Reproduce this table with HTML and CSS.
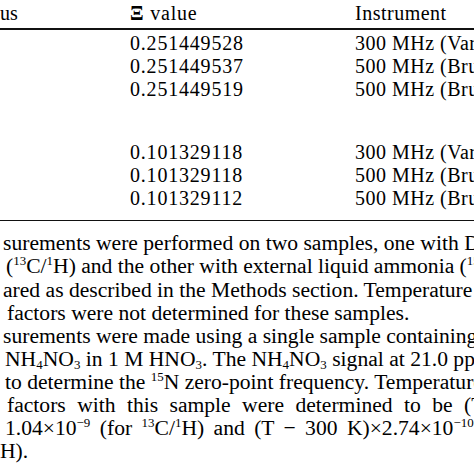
FILE: index.html
```html
<!DOCTYPE html>
<html>
<head>
<meta charset="utf-8">
<link rel="stylesheet" href="styles.css">
</head>
<body>
<div class="page">
  <div class="table">
    <div class="row head">
      <div class="c1">us</div>
      <div class="c2"><span class="xi">Ξ</span> value</div>
      <div class="c3">Instrument</div>
    </div>
    <div class="rule top"></div>
    <div class="body">
      <div class="row"><div class="c1"></div><div class="c2">0.251449528</div><div class="c3">300 MHz (Varian)</div></div>
      <div class="row"><div class="c1"></div><div class="c2">0.251449537</div><div class="c3">500 MHz (Bruker)</div></div>
      <div class="row"><div class="c1"></div><div class="c2">0.251449519</div><div class="c3">500 MHz (Bruker)</div></div>
      <div class="spacer"></div>
      <div class="row"><div class="c1"></div><div class="c2">0.101329118</div><div class="c3">300 MHz (Varian)</div></div>
      <div class="row"><div class="c1"></div><div class="c2">0.101329118</div><div class="c3">500 MHz (Bruker)</div></div>
      <div class="row"><div class="c1"></div><div class="c2">0.101329112</div><div class="c3">500 MHz (Bruker)</div></div>
    </div>
    <div class="rule bottom"></div>
  </div>
  <div class="notes">
    <div class="ln l1">surements were performed on two samples, one with DSS</div>
    <div class="ln l2">(<sup>13</sup>C/<sup>1</sup>H) and the other with external liquid ammonia (<sup>15</sup>N</div>
    <div class="ln l3">ared as described in the Methods section. Temperature co</div>
    <div class="ln l4">factors were not determined for these samples.</div>
    <div class="ln l5">surements were made using a single sample containing DSS</div>
    <div class="ln l6">NH<sub>4</sub>NO<sub>3</sub> in 1 M HNO<sub>3</sub>. The NH<sub>4</sub>NO<sub>3</sub> signal at 21.0 ppm</div>
    <div class="ln l7">to determine the <sup>15</sup>N zero-point frequency. Temperature co</div>
    <div class="ln l8">factors with this sample were determined to be (T</div>
    <div class="ln l9">1.04×10<sup>−9</sup> (for <sup>13</sup>C/<sup>1</sup>H) and (T − 300 K)×2.74×10<sup>−10</sup></div>
    <div class="ln l10">H).</div>
  </div>
</div>
</body>
</html>
```
FILE: styles.css
```css
html, body {
  margin: 0;
  padding: 0;
  background: #fff;
}
body {
  width: 474px;
  height: 474px;
  overflow: hidden;
}
.page {
  width: 474px;
  overflow: hidden;
  font-family: "Liberation Serif", "Times New Roman", serif;
  color: #000;
  font-size: 20px;
}
.table {
  display: flex;
  flex-direction: column;
}
.row {
  display: grid;
  grid-template-columns: 130px 225px 200px;
  height: 23.4px;
  line-height: 23.4px;
  white-space: nowrap;
}
.head {
  height: 24px;
  line-height: 24px;
  padding-top: 1px;
}
.c2 {
  letter-spacing: 0.8px;
}
.c3 {
  letter-spacing: 0.5px;
}
.xi {
  font-weight: bold;
}
.rule {
  height: 1.5px;
  background: #111;
  width: 474px;
}
.rule.top {
  margin-top: 3px;
}
.body {
  padding-top: 2px;
  padding-bottom: 9px;
}
.spacer {
  height: 39px;
}
.notes {
  padding-top: 11px;
  font-size: 21.6px;
}
.ln {
  white-space: nowrap;
  height: 23.1px;
  line-height: 23.1px;
}
.l1, .l3, .l5 { padding-left: 3px; }
.l2 { padding-left: 6px; }
.l4, .l8 { padding-left: 7px; }
.l6, .l7, .l9 { padding-left: 5px; }
.l10 { padding-left: 0; }
.l8 { word-spacing: 6px; }
.l9 { word-spacing: 4px; }
sup, sub {
  font-size: 0.6em;
  line-height: 0;
}
sup { vertical-align: 0.6em; }
sub { vertical-align: -0.2em; }
```
